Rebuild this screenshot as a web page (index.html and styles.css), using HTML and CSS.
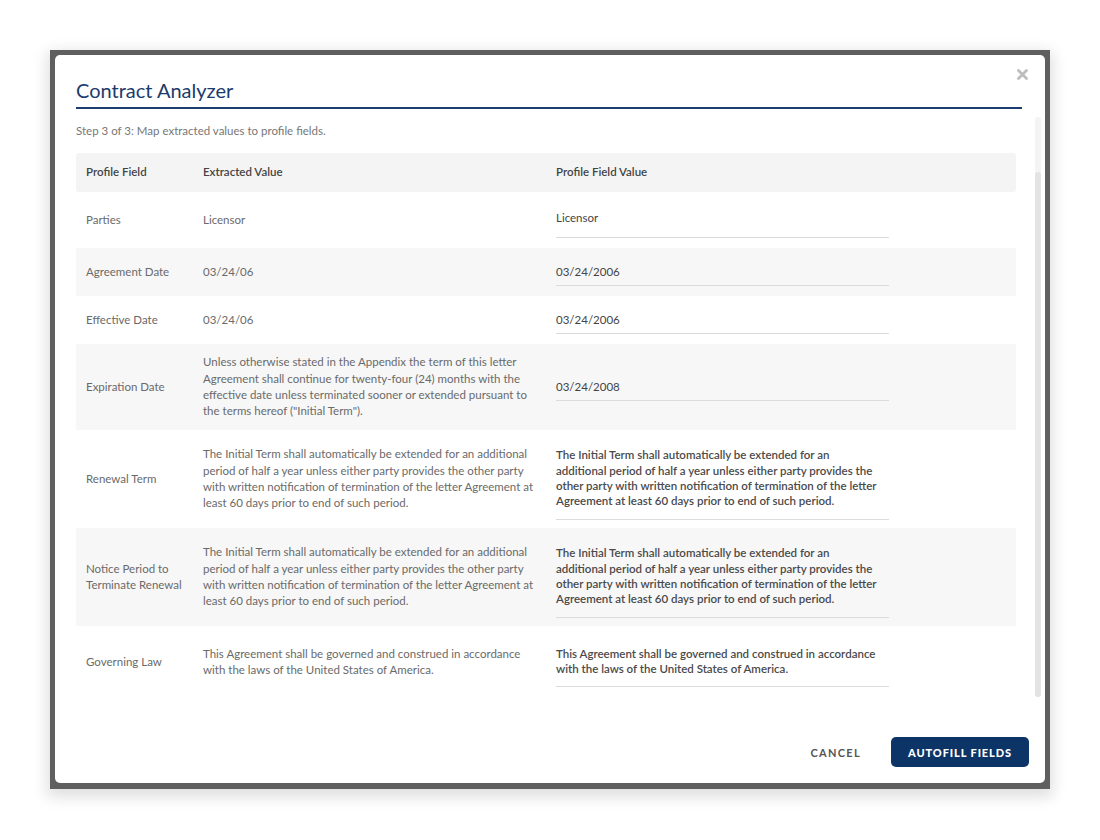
FILE: index.html
```html
<!DOCTYPE html>
<html lang="en">
<head>
<meta charset="utf-8">
<title>Contract Analyzer</title>
<link rel="stylesheet" href="styles.css">
</head>
<body>
<div class="stage">
  <div class="overlay">
    <div class="dialog">
      <button class="close" aria-label="Close">
        <svg width="11" height="11" viewBox="0 0 11 11"><path d="M1.5 1.5 L9.5 9.5 M9.5 1.5 L1.5 9.5" stroke="#bdbdbd" stroke-width="2.8" stroke-linecap="round"/></svg>
      </button>
      <h1 class="title">Contract Analyzer</h1>
      <p class="step">Step 3 of 3: Map extracted values to profile fields.</p>
      <div class="table">
        <div class="row head">
          <div class="c1">Profile Field</div>
          <div class="c2">Extracted Value</div>
          <div class="c3">Profile Field Value</div>
        </div>
        <div class="row r-parties">
          <div class="c1">Parties</div>
          <div class="c2">Licensor</div>
          <div class="c3"><div class="field first">Licensor</div></div>
        </div>
        <div class="row alt r-short">
          <div class="c1">Agreement Date</div>
          <div class="c2">03/24/06</div>
          <div class="c3"><div class="field">03/24/2006</div></div>
        </div>
        <div class="row r-short">
          <div class="c1">Effective Date</div>
          <div class="c2">03/24/06</div>
          <div class="c3"><div class="field">03/24/2006</div></div>
        </div>
        <div class="row alt r-exp">
          <div class="c1">Expiration Date</div>
          <div class="c2">Unless otherwise stated in the Appendix the term of this letter<br>Agreement shall continue for twenty-four (24) months with the<br>effective date unless terminated sooner or extended pursuant to<br>the terms hereof ("Initial Term").</div>
          <div class="c3"><div class="field">03/24/2008</div></div>
        </div>
        <div class="row r-long">
          <div class="c1">Renewal Term</div>
          <div class="c2">The Initial Term shall automatically be extended for an additional<br>period of half a year unless either party provides the other party<br>with written notification of termination of the letter Agreement at<br>least 60 days prior to end of such period.</div>
          <div class="c3"><div class="field area">The Initial Term shall automatically be extended for an<br>additional period of half a year unless either party provides the<br>other party with written notification of termination of the letter<br>Agreement at least 60 days prior to end of such period.</div></div>
        </div>
        <div class="row alt r-long">
          <div class="c1">Notice Period to<br>Terminate Renewal</div>
          <div class="c2">The Initial Term shall automatically be extended for an additional<br>period of half a year unless either party provides the other party<br>with written notification of termination of the letter Agreement at<br>least 60 days prior to end of such period.</div>
          <div class="c3"><div class="field area">The Initial Term shall automatically be extended for an<br>additional period of half a year unless either party provides the<br>other party with written notification of termination of the letter<br>Agreement at least 60 days prior to end of such period.</div></div>
        </div>
        <div class="row r-law">
          <div class="c1">Governing Law</div>
          <div class="c2">This Agreement shall be governed and construed in accordance<br>with the laws of the United States of America.</div>
          <div class="c3"><div class="field area">This Agreement shall be governed and construed in accordance<br>with the laws of the United States of America.</div></div>
        </div>
      </div>
      <div class="scrollbar"><div class="thumb"></div></div>
      <div class="footer">
        <button class="btn-cancel">CANCEL</button>
        <button class="btn-primary">AUTOFILL FIELDS</button>
      </div>
    </div>
  </div>
</div>
</body>
</html>
```
FILE: styles.css
```css
html, body {
  margin: 0;
  padding: 0;
  background: #ffffff;
}
body {
  font-family: Lato, "Open Sans", "Liberation Sans", sans-serif;
  color: #666;
  width: 1100px;
  height: 840px;
  overflow: hidden;
}
.stage {
  padding: 50px 0 0 50px;
}
.overlay {
  width: 990px;
  height: 728px;
  background: #5f5f5f;
  padding: 5px 5px 6px 5px;
  box-shadow: 0 5px 14px 3px rgba(0, 0, 0, 0.13);
}
.dialog {
  position: relative;
  height: 100%;
  box-sizing: border-box;
  background: #fff;
  border-radius: 5px;
  padding: 22px 16px 16px 21px;
  display: flex;
  flex-direction: column;
}
.close {
  position: absolute;
  right: 17px;
  top: 14px;
  border: 0;
  background: none;
  padding: 0;
  width: 11px;
  height: 11px;
  display: flex;
}
.title {
  margin: 0 7px 0 0;
  font-size: 20px;
  line-height: 26px;
  font-weight: 400;
  color: #1c3b6c;
  padding-bottom: 4px;
  border-bottom: 2px solid #1d3d70;
}
.step {
  margin: 14px 0 14px;
  font-size: 11.5px;
  line-height: 16px;
  color: #777;
}
.table {
  width: 940px;
  font-size: 11.5px;
  line-height: 16.3px;
}
.row {
  display: grid;
  grid-template-columns: 117px 353px 333px 1fr;
  align-items: center;
  padding-left: 10px;
  box-sizing: border-box;
}
.row.alt {
  background: #f7f7f7;
}
.row.head {
  height: 39px;
  background: #f4f4f4;
  border-radius: 3px;
  font-weight: 600;
  color: #444;
}
.r-parties { height: 56px; }
.r-short { height: 48px; }
.r-exp { height: 86px; }
.r-long { height: 98px; }
.r-law { height: 72px; }
.c1, .c2 {
  color: #6a6a6a;
}
.head .c1, .head .c2, .head .c3 {
  color: #444;
}
.field {
  color: #444;
  padding: 6px 0 5px;
  border-bottom: 1px solid #dcdcdc;
}
.field.first {
  padding: 8px 0 10px;
}
.field.area {
  font-weight: 600;
  line-height: 15.3px;
  padding: 4px 0 10px;
  margin-top: 5px;
  color: #4a4a4a;
}
.scrollbar {
  position: absolute;
  left: 980px;
  top: 62px;
  width: 6px;
  height: 580px;
  background: #f4f4f4;
  border-radius: 3px;
}
.thumb {
  margin-top: 55px;
  height: 525px;
  background: #e3e3e3;
  border-radius: 3px;
}
.footer {
  margin-top: auto;
  display: flex;
  justify-content: flex-end;
  align-items: center;
  gap: 22px;
}
.btn-cancel {
  border: 0;
  background: none;
  font-family: inherit;
  font-size: 11px;
  font-weight: 700;
  letter-spacing: 1.3px;
  color: #555;
  padding: 0 8px;
  height: 30px;
}
.btn-primary {
  border: 0;
  background: #0d3466;
  color: #fff;
  font-family: inherit;
  font-size: 11px;
  font-weight: 900;
  letter-spacing: 0.9px;
  height: 30px;
  width: 138px;
  border-radius: 5px;
  padding: 0;
}
```
